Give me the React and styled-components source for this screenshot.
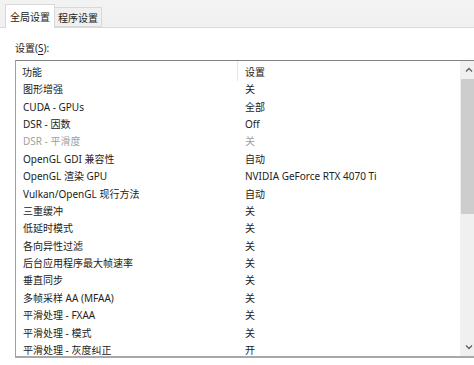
import React from 'react';
import styled, { createGlobalStyle } from 'styled-components';

const GlobalStyle = createGlobalStyle`
  html, body {
    margin: 0;
    padding: 0;
    background: #ffffff;
  }
  body {
    font-family: "Noto Sans", "Noto Sans CJK SC", sans-serif;
    font-size: 10px;
    color: #222222;
  }
`;

const rows = [
  { name: '图形增强', value: '关' },
  { name: 'CUDA - GPUs', value: '全部' },
  { name: 'DSR - 因数', value: 'Off' },
  { name: 'DSR - 平滑度', value: '关', disabled: true },
  { name: 'OpenGL GDI 兼容性', value: '自动' },
  { name: 'OpenGL 渲染 GPU', value: 'NVIDIA GeForce RTX 4070 Ti' },
  { name: 'Vulkan/OpenGL 现行方法', value: '自动' },
  { name: '三重缓冲', value: '关' },
  { name: '低延时模式', value: '关' },
  { name: '各向异性过滤', value: '关' },
  { name: '后台应用程序最大帧速率', value: '关' },
  { name: '垂直同步', value: '关' },
  { name: '多帧采样 AA (MFAA)', value: '关' },
  { name: '平滑处理 - FXAA', value: '关' },
  { name: '平滑处理 - 模式', value: '关' },
  { name: '平滑处理 - 灰度纠正', value: '开' },
];

function App() {
  return (
    <>
      <GlobalStyle />
      <Window>
        <TabStrip>
          <Tab $active>全局设置</Tab>
          <Tab>程序设置</Tab>
        </TabStrip>
        <Panel>
          <Label>设置(<u>S</u>):</Label>
          <ListBox>
            <Table>
              <HeaderRow>
                <HeadCell>功能</HeadCell>
                <HeadCell $divider>设置</HeadCell>
              </HeaderRow>
              {rows.map((r) => (
                <Row key={r.name} $disabled={r.disabled}>
                  <Cell>{r.name}</Cell>
                  <Cell $value>{r.value}</Cell>
                </Row>
              ))}
            </Table>
            <ScrollBar>
              <Arrow>
                <svg width="8" height="5" viewBox="0 0 8 5">
                  <path d="M1 4.5 L4 1.5 L7 4.5" fill="none" stroke="#606060" strokeWidth="1.3" />
                </svg>
              </Arrow>
              <Track>
                <Thumb />
              </Track>
              <Arrow>
                <svg width="8" height="5" viewBox="0 0 8 5">
                  <path d="M1 0.5 L4 3.5 L7 0.5" fill="none" stroke="#606060" strokeWidth="1.3" />
                </svg>
              </Arrow>
            </ScrollBar>
          </ListBox>
        </Panel>
      </Window>
    </>
  );
}

export default App;

const Window = styled.div`
  width: 474px;
  height: 365px;
  overflow: hidden;
  background: #ffffff;
`;

const TabStrip = styled.div`
  height: 27px;
  display: flex;
  align-items: flex-end;
  padding-left: 5px;
  background: linear-gradient(#f3f3f3, #f0f0f0);
  border-bottom: 1px solid #d9d9d9;
`;

const Tab = styled.div`
  box-sizing: border-box;
  height: ${(p) => (p.$active ? '24px' : '20px')};
  padding: ${(p) => (p.$active ? '0 4px' : '0 3px')};
  display: flex;
  align-items: center;
  margin-bottom: ${(p) => (p.$active ? '-1px' : '0')};
  background: ${(p) => (p.$active ? '#ffffff' : '#f0f0f0')};
  border: 1px solid #d9d9d9;
  border-bottom: ${(p) => (p.$active ? 'none' : '1px solid #d9d9d9')};
  border-left: ${(p) => (p.$active ? '1px solid #d9d9d9' : 'none')};
  color: #222222;
`;

const Panel = styled.div`
  padding: 12px 0 0 15px;
`;

const Label = styled.div`
  height: 17px;
  line-height: 17px;
  margin-bottom: 3px;
  u {
    text-underline-offset: 2px;
  }
`;

const ListBox = styled.div`
  box-sizing: border-box;
  width: 480px;
  height: 298px;
  display: flex;
  border: 1px solid #a0a0a0;
  border-top-color: #828282;
  border-bottom: 2px solid #a8a8a8;
  background: #ffffff;
`;

const Table = styled.div`
  width: 444px;
  overflow: hidden;
`;

const HeaderRow = styled.div`
  display: grid;
  grid-template-columns: 221px 1fr;
  height: 20px;
`;

const Row = styled.div`
  display: grid;
  grid-template-columns: 221px 1fr;
  height: 17.4px;
  align-items: center;
  color: ${(p) => (p.$disabled ? '#a0a0a0' : '#222222')};
`;

const Cell = styled.div`
  padding-left: ${(p) => (p.$value ? '8px' : '7px')};
  white-space: nowrap;
  line-height: 17px;
`;

const HeadCell = styled.div`
  padding-left: ${(p) => (p.$divider ? '7px' : '6px')};
  border-left: ${(p) => (p.$divider ? '1px solid #e5e5e5' : 'none')};
  display: flex;
  align-items: center;
`;

const ScrollBar = styled.div`
  width: 17px;
  display: flex;
  flex-direction: column;
  background: #f0f0f0;
`;

const Arrow = styled.div`
  height: 17px;
  display: flex;
  align-items: center;
  justify-content: center;
`;

const Track = styled.div`
  flex: 1;
  padding: 0 1px;
`;

const Thumb = styled.div`
  margin-top: 1px;
  height: 135px;
  background: #cdcdcd;
`;
